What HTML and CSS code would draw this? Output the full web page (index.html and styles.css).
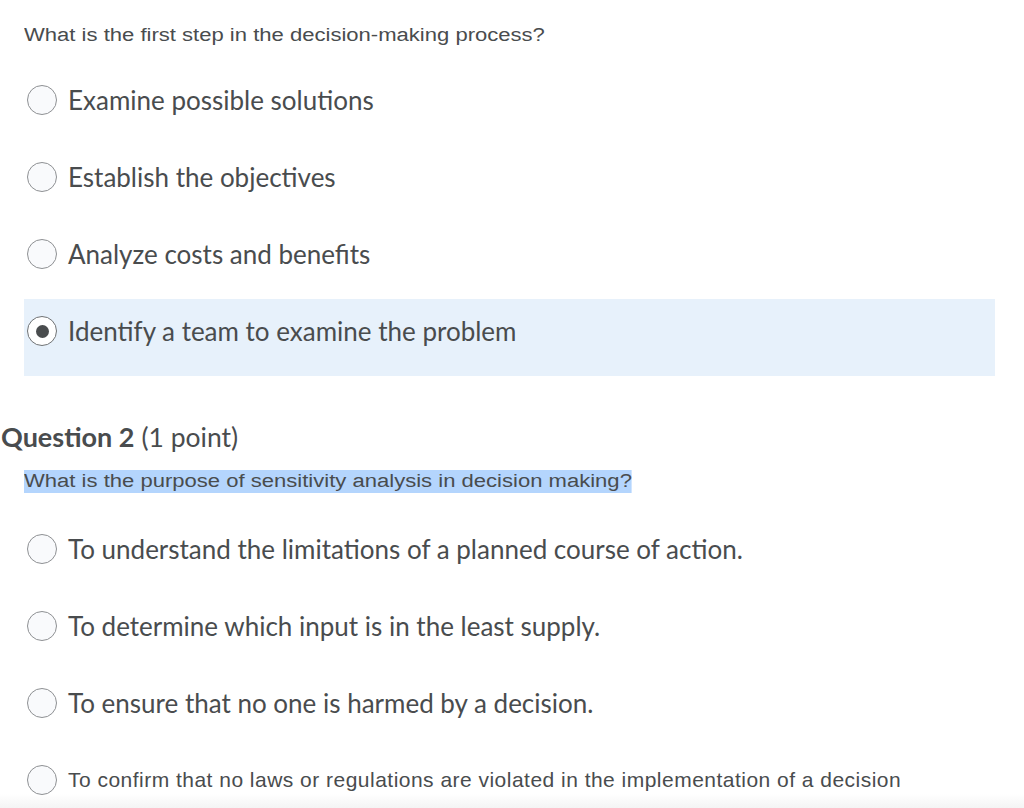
FILE: index.html
```html
<!DOCTYPE html>
<html lang="en">
<head>
<meta charset="utf-8">
<title>Quiz</title>
<link rel="stylesheet" href="styles.css">
</head>
<body>
<div class="page">
  <section class="question">
    <p class="prompt"><span class="txt">What is the first step in the decision-making process?</span></p>
    <ul class="options">
      <li class="option"><span class="radio"></span><span class="label">Examine possible solutions</span></li>
      <li class="option"><span class="radio"></span><span class="label">Establish the objectives</span></li>
      <li class="option"><span class="radio"></span><span class="label">Analyze costs and benefits</span></li>
      <li class="option selected"><span class="radio checked"></span><span class="label">Identify a team to examine the problem</span></li>
    </ul>
  </section>

  <section class="question q2">
    <h2 class="q-title"><strong>Question 2</strong> <span class="pts">(1 point)</span></h2>
    <p class="prompt"><span class="txt sel">What is the purpose of sensitivity analysis in decision making?</span></p>
    <ul class="options">
      <li class="option"><span class="radio"></span><span class="label">To understand the limitations of a planned course of action.</span></li>
      <li class="option"><span class="radio"></span><span class="label">To determine which input is in the least supply.</span></li>
      <li class="option"><span class="radio"></span><span class="label">To ensure that no one is harmed by a decision.</span></li>
      <li class="option"><span class="radio"></span><span class="label small">To confirm that no laws or regulations are violated in the implementation of a decision</span></li>
    </ul>
  </section>
</div>
</body>
</html>
```

FILE: styles.css
```css
html {
  background: linear-gradient(to bottom, #ffffff 0, #ffffff 794px, #f4f4f4 808px);
  min-height: 100%;
}
body {
  margin: 0;
  color: #494c4e;
  font-family: Lato, "Noto Sans", sans-serif;
}
.page {
  width: 1024px;
  padding-top: 24px;
}
.question {
  padding-left: 24px;
  width: 971px;
}
.prompt {
  margin: 0;
  font-family: "Liberation Sans", Arial, sans-serif;
  font-size: 18px;
  line-height: 22px;
  height: 22px;
  margin-bottom: 22px;
  white-space: nowrap;
}
.txt {
  display: inline-block;
  transform-origin: left center;
  transform: scaleX(1.225);
}
.sel {
  background: #b4d5fd;
  line-height: 23px;
}
.options {
  list-style: none;
  margin: 0;
  padding: 0;
}
.option {
  display: flex;
  align-items: center;
  height: 77px;
  box-sizing: border-box;
  padding: 17px 0 30px 3px;
  gap: 11px;
}
.option.selected {
  background: #e7f1fb;
}
.radio {
  flex: none;
  width: 30px;
  height: 30px;
  box-sizing: border-box;
  border: 1px solid #8e9093;
  border-radius: 50%;
  background: #f9fafc;
  display: flex;
  align-items: center;
  justify-content: center;
}
.radio.checked {
  background: #fff;
  border-color: #6f7274;
}
.radio.checked::after {
  content: "";
  width: 13px;
  height: 13px;
  border-radius: 50%;
  background: #494c4e;
}
.label {
  font-size: 26px;
  line-height: 30px;
  white-space: nowrap;
}
.label.small {
  font-family: "Liberation Sans", Arial, sans-serif;
  font-size: 21px;
  letter-spacing: 0.48px;
}
.q2 {
  padding-left: 24px;
  margin-top: 46px;
}
.q-title {
  margin: 0 0 18px -23px;
  font-size: 27px;
  line-height: 30px;
  font-weight: 400;
}
.q-title strong {
  font-weight: 700;
}
.pts {
  font-size: 26.5px;
}
.q2 .prompt {
  margin-bottom: 25px;
}
```
